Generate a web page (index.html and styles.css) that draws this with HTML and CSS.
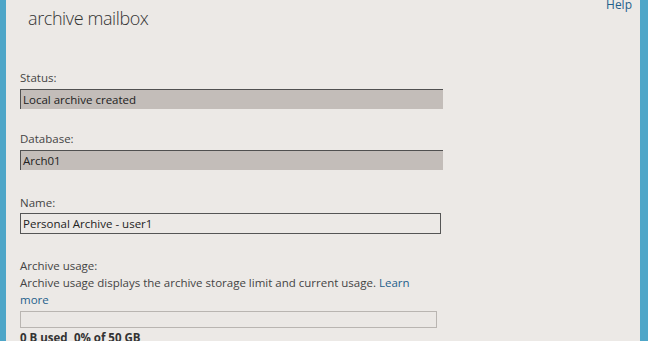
FILE: index.html
```html
<!DOCTYPE html>
<html lang="en">
<head>
    <meta charset="UTF-8">
    <title>archive mailbox</title>
    <link rel="stylesheet" href="styles.css">
</head>
<body>
    <div class="dialog">
        <div class="dialog-head">
            <h1 class="title">archive mailbox</h1>
            <a class="help" href="#">Help</a>
        </div>
        <div class="dialog-body">
            <div class="field status">
                <label>Status:</label>
                <div class="box readonly">Local archive created</div>
            </div>
            <div class="field database">
                <label>Database:</label>
                <div class="box readonly">Arch01</div>
            </div>
            <div class="field name">
                <label for="name">Name:</label>
                <input class="box edit" type="text" id="name" value="Personal Archive - user1">
            </div>
            <div class="field usage">
                <label>Archive usage:</label>
                <p class="desc">Archive usage displays the archive storage limit and current usage. <a href="#">Learn more</a></p>
                <div class="usage-bar"></div>
                <p class="used">0 B used, 0% of 50 GB</p>
            </div>
        </div>
    </div>
</body>
</html>
```

FILE: styles.css
```css
body {
    margin: 0;
    background-color: #ece9e6;
    font-family: "Open Sans", "Noto Sans", sans-serif;
    color: #444;
}
.dialog {
    height: 341px;
    overflow: hidden;
    border-left: 6px solid #4ea6c8;
    border-right: 8px solid #4ea6c8;
    box-sizing: border-box;
}
.dialog-head {
    display: flex;
    justify-content: space-between;
    align-items: flex-start;
    height: 44px;
}
.title {
    margin: 6px 0 0 22px;
    font-size: 18px;
    font-weight: 300;
    letter-spacing: -0.4px;
    line-height: 24px;
    color: #333;
}
.help {
    margin: -3px 8px 0 0;
    font-size: 12px;
    line-height: 16px;
    color: #1f5f8b;
    text-decoration: none;
}
.dialog-body {
    padding: 0 0 0 14px;
}
.field {
    display: flex;
    flex-direction: column;
    align-items: flex-start;
}
.field label {
    font-size: 11.5px;
    line-height: 16px;
    margin-bottom: 3px;
}
.status {
    margin-top: 26px;
}
.database {
    margin-top: 22px;
}
.name {
    margin-top: 25px;
}
.name label {
    margin-bottom: 2px;
}
.usage {
    margin-top: 24px;
}
.usage label {
    margin-bottom: 0;
}
.box {
    box-sizing: border-box;
    font-family: inherit;
    font-size: 11.5px;
    color: #222;
    padding: 0 0 0 2px;
    margin: 0;
}
.readonly {
    width: 423px;
    height: 20px;
    line-height: 19px;
    background-color: #c3bdb9;
    border-top: 1px solid #505050;
    border-left: 1px solid #505050;
}
.edit {
    width: 421px;
    height: 21px;
    line-height: 19px;
    background-color: #ece9e6;
    border: 1px solid #555;
    outline: none;
}
.desc {
    margin: 0;
    width: 400px;
    font-size: 11.5px;
    line-height: 17px;
}
.desc a {
    color: #1f5f8b;
    text-decoration: none;
}
.usage-bar {
    margin-top: 3px;
    width: 417px;
    height: 17px;
    box-sizing: border-box;
    border: 1px solid #b9b5b1;
    background-color: #ebe8e5;
}
.used {
    margin: 2px 0 0;
    font-size: 11.5px;
    font-weight: bold;
    line-height: 16px;
    color: #333;
}
```
